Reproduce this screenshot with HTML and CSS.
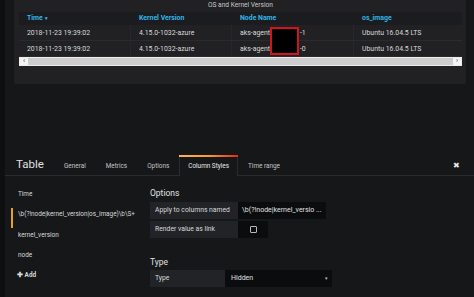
FILE: index.html
```html
<!DOCTYPE html>
<html>
<head>
<meta charset="utf-8">
<link rel="stylesheet" href="styles.css">
</head>
<body>
<div class="page">
  <div class="edge"></div>
  <div class="main">
    <div class="top">
      <div class="panel">
        <div class="panel-title">OS and Kernel Version</div>
        <div class="table">
          <div class="row head">
            <div class="c c1">Time <span class="caret">▾</span></div>
            <div class="c c2">Kernel Version</div>
            <div class="c c3">Node Name</div>
            <div class="c c4">os_image</div>
          </div>
          <div class="row">
            <div class="c c1">2018-11-23 19:39:02</div>
            <div class="c c2">4.15.0-1032-azure</div>
            <div class="c c3">aks-agent-<span class="gap"></span>-1</div>
            <div class="c c4">Ubuntu 16.04.5 LTS</div>
          </div>
          <div class="row">
            <div class="c c1">2018-11-23 19:39:02</div>
            <div class="c c2">4.15.0-1032-azure</div>
            <div class="c c3">aks-agent-<span class="gap"></span>-0</div>
            <div class="c c4">Ubuntu 16.04.5 LTS</div>
          </div>
          <div class="redact"></div>
        </div>
        <div class="scrollbar">
          <div class="sb-btn">‹</div>
          <div class="sb-track"></div>
          <div class="sb-btn">›</div>
        </div>
      </div>
    </div>
    <div class="editor">
      <div class="tabs">
        <div class="tabs-title">Table</div>
        <div class="tab">General</div>
        <div class="tab">Metrics</div>
        <div class="tab">Options</div>
        <div class="tab active">Column Styles</div>
        <div class="tab">Time range</div>
        <div class="close">✖</div>
      </div>
      <div class="body">
        <div class="list">
          <div class="item">Time</div>
          <div class="item sel">\b(?!node|kernel_version|os_image)\b\S+</div>
          <div class="item">kernel_version</div>
          <div class="item">node</div>
          <div class="item add"><span class="plus">✚</span> Add</div>
        </div>
        <div class="opts">
          <div class="sec">Options</div>
          <div class="form">
            <div class="label w1">Apply to columns named</div>
            <div class="input">\b(?!node|kernel_versio ...</div>
          </div>
          <div class="form">
            <div class="label w1">Render value as link</div>
            <div class="check"><span class="box"></span></div>
          </div>
          <div class="sec sec2">Type</div>
          <div class="form">
            <div class="label w2">Type</div>
            <div class="select">Hidden<span class="dd">▾</span></div>
          </div>
        </div>
      </div>
    </div>
  </div>
</div>
</body>
</html>
```
FILE: styles.css
```css
* { box-sizing: border-box; }
html, body { margin: 0; padding: 0; }
body {
  width: 474px; height: 297px; overflow: hidden;
  background: #161719;
  font-family: Roboto, "Liberation Sans", sans-serif;
  color: #d8d9da;
}
.page { display: flex; width: 474px; height: 297px; }
.edge { width: 5px; background: #0e0f10; flex: none; }
.main { flex: 1; display: flex; flex-direction: column; }
.top { height: 85px; padding: 0 4px 0 9px; background: #161719; }
.panel {
  height: 84px; width: 452px;
  background: #212124;
  border-radius: 0 0 2px 2px;
  padding: 0 4px 0 5px;
}
.panel-title {
  height: 12px; line-height: 10px;
  text-align: center; font-size: 6.6px; color: #c8c9ca;
}
.table { position: relative; }
.row { display: flex; height: 16px; border-bottom: 1px solid #2b2b2f; }
.row.head { height: 13px; background: #1b1c1f; border-bottom: 0; }
.c {
  font-size: 6.9px; line-height: 16px; padding-left: 8px;
  border-right: 1px solid #28282c; white-space: nowrap; color: #d8d9da;
}
.head .c { color: #33b5e5; font-weight: bold; line-height: 13px; border-right: 0; }
.caret { font-size: 5px; }
.c1 { width: 112px; }
.c2 { width: 101px; }
.c3 { width: 122px; }
.c4 { flex: 1; border-right: 0; }
.gap { display: inline-block; width: 28px; }
.redact {
  position: absolute; left: 251px; top: 15px; width: 29px; height: 28px;
  background: #000; border: 2px solid #d4141b;
}
.scrollbar {
  margin-top: 0; height: 9px; display: flex;
  background: #cdcdcd; border: 1px solid #ececec;
}
.sb-btn {
  width: 8px; background: #f4f4f4; color: #444; font-size: 7px; line-height: 6px; text-align: center;
}
.sb-track { flex: 1; }
.editor { flex: 1; padding-top: 69px; }
.tabs {
  display: flex; align-items: flex-end; height: 22px;
  border-bottom: 1px solid #2a2b2e; padding-left: 11px; position: relative;
}
.tabs-title { font-size: 11.5px; line-height: 21px; width: 38px; color: #e0e0e0; }
.tab {
  font-size: 6.4px; line-height: 20px; padding: 0 9px; color: #c3c4c6;
  border: 1px solid transparent; border-bottom: 0; margin-bottom: -1px; height: 21px;
}
.tab.active {
  background: #161719; border-color: #2a2b2e; color: #e8e8e8; position: relative;
  border-top: 0; padding: 1px 8px 0;
}
.tab.active::before {
  content: ""; position: absolute; left: -1px; right: -1px; top: 0; height: 2px;
  background: linear-gradient(90deg, #ffb357, #ff9a2f 50%, #e02d1b);
}
.close { position: absolute; right: 14px; top: 7px; font-size: 8px; color: #e8e8e8; }
.body { display: flex; padding-top: 12px; }
.list { width: 145px; padding-left: 6px; }
.item { font-size: 6.4px; height: 20px; line-height: 12px; padding-left: 7px; color: #d8d9da; white-space: nowrap; }
.item.sel { border-left: 2px solid #e5a12a; padding-left: 5px; margin-bottom: 1px; }
.add { font-weight: bold; padding-left: 6px; }
.plus { font-size: 7px; }
.opts { display: flex; flex-direction: column; }
.sec { font-size: 8.5px; height: 10px; line-height: 10px; color: #e0e0e0; margin-bottom: 4px; }
.sec2 { margin-top: 17px; margin-bottom: 3px; }
.form { display: flex; height: 17px; margin-bottom: 2px; }
.label {
  background: #222327; font-size: 6.8px; line-height: 17px; padding-left: 5px; color: #d8d9da; white-space: nowrap;
}
.w1 { width: 88px; }
.w2 { width: 75px; }
.input {
  width: 88px; background: #0b0c0e; font-size: 7px; line-height: 17px; padding-left: 4px; color: #e0e0e0; white-space: nowrap;
}
.check {
  width: 30px; background: #0b0c0e; display: flex; align-items: center; justify-content: center;
}
.box { width: 7px; height: 7px; border: 1px solid #b8b9ba; border-radius: 1px; }
.select {
  width: 107px; background: #0b0c0e; font-size: 7px; line-height: 17px; padding-left: 6px; color: #e0e0e0;
  display: flex; justify-content: space-between; padding-right: 4px;
}
.dd { font-size: 5px; color: #c0c0c0; }
```
